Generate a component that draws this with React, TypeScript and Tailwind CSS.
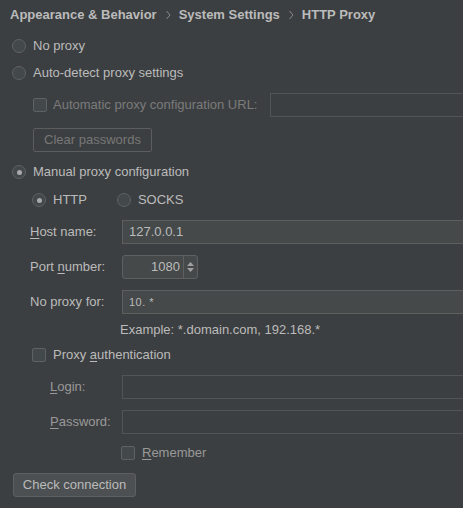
import React from "react";

const font = { fontFamily: '"Liberation Sans", Arial, sans-serif' };

function Radio({ checked }: { checked?: boolean }) {
  return (
    <span className="flex h-[14px] w-[14px] shrink-0 items-center justify-center rounded-full border border-[#5e6264] bg-[#43494a]">
      {checked && <span className="h-[5px] w-[5px] rounded-full bg-[#a9a9a9]" />}
    </span>
  );
}

function Checkbox() {
  return <span className="block h-[14px] w-[14px] shrink-0 rounded-[2px] border border-[#5e6264] bg-[#43494a]" />;
}

function Chevron() {
  return (
    <svg width="12" height="12" viewBox="0 0 12 12" className="mx-[5px] shrink-0">
      <path d="M4.5 2 L8 6 L4.5 10" fill="none" stroke="#8a8a8a" strokeWidth="1" />
    </svg>
  );
}

function Input({ value, small }: { value?: string; small?: boolean }) {
  return (
    <div className="flex h-[24px] w-[380px] shrink-0 items-center border border-[#5e6060] bg-[#45494a] px-[6px] text-[13px] text-[#bbbbbb]">
      {small ? <span className="text-[11px] tracking-[0.5px]">{value}</span> : value}
    </div>
  );
}

export default function App() {
  return (
    <div className="h-[508px] w-[463px] overflow-hidden whitespace-nowrap bg-[#3c3f41] text-[13px] text-[#bbbbbb]" style={font}>
      <div className="flex h-[30px] items-center pl-[10px] font-bold text-[#bbbbbb]">
        <span>Appearance &amp; Behavior</span>
        <Chevron />
        <span>System Settings</span>
        <Chevron />
        <span>HTTP Proxy</span>
      </div>

      <div className="mt-[2px] flex h-[28px] items-center gap-[7px] pl-[12px]">
        <Radio />
        <span>No proxy</span>
      </div>
      <div className="flex h-[26px] items-center gap-[7px] pl-[12px]">
        <Radio />
        <span>Auto-detect proxy settings</span>
      </div>

      <div className="mt-[6px] flex h-[25px] items-center pl-[33px]">
        <Checkbox />
        <span className="ml-[6px] shrink-0 text-[#7b7b7b]">Automatic proxy configuration URL:</span>
        <div className="ml-[13px] h-[24px] w-[300px] shrink-0 border border-[#525556] bg-[#3c3f41]" />
      </div>

      <div className="mt-[11px] pl-[33px]">
        <div className="flex h-[24px] w-[119px] items-center justify-center rounded-[2px] border border-[#5b5d5f] text-[#777777]">
          Clear passwords
        </div>
      </div>

      <div className="mt-[7px] flex h-[26px] items-center gap-[7px] pl-[12px]">
        <Radio checked />
        <span>Manual proxy configuration</span>
      </div>

      <div className="mt-[2px] flex h-[26px] items-center pl-[32px]">
        <Radio checked />
        <span className="ml-[7px]">HTTP</span>
        <span className="ml-[30px]"><Radio /></span>
        <span className="ml-[7px]">SOCKS</span>
      </div>

      <div className="mt-[7px] flex items-center pl-[30px]">
        <span className="w-[92px] shrink-0"><u className="underline-offset-2">H</u>ost name:</span>
        <Input value="127.0.0.1" />
      </div>

      <div className="mt-[11px] flex items-center pl-[30px]">
        <span className="w-[92px] shrink-0">Port <u className="underline-offset-2">n</u>umber:</span>
        <div className="flex h-[24px] w-[76px] shrink-0 items-stretch rounded-[3px] border border-[#5e6060] bg-[#45494a]">
          <span className="flex flex-1 items-center justify-end pr-[3px] text-[13px]">1080</span>
          <span className="w-px bg-[#5e6060]" />
          <span className="flex w-[13px] flex-col items-center justify-center gap-[2px]">
            <svg width="7" height="4" viewBox="0 0 7 4"><path d="M0 4 L3.5 0 L7 4 Z" fill="#a0a0a0" /></svg>
            <svg width="7" height="4" viewBox="0 0 7 4"><path d="M0 0 L3.5 4 L7 0 Z" fill="#a0a0a0" /></svg>
          </span>
        </div>
      </div>

      <div className="mt-[11px] flex items-center pl-[30px]">
        <span className="w-[92px] shrink-0">No proxy for:</span>
        <Input value="10. *" small />
      </div>

      <div className="mt-[5px] flex h-[22px] items-center pl-[120px]">Example: *.domain.com, 192.168.*</div>

      <div className="mt-[2px] flex h-[24px] items-center pl-[32px]">
        <Checkbox />
        <span className="ml-[7px]">Proxy <u className="underline-offset-2">a</u>uthentication</span>
      </div>

      <div className="mt-[8px] flex items-center pl-[50px]">
        <span className="w-[72px] shrink-0 text-[#999999]"><u className="underline-offset-2">L</u>ogin:</span>
        <div className="h-[24px] w-[380px] shrink-0 border border-[#525556] bg-[#3c3f41]" />
      </div>

      <div className="mt-[11px] flex items-center pl-[50px]">
        <span className="w-[72px] shrink-0 text-[#999999]"><u className="underline-offset-2">P</u>assword:</span>
        <div className="h-[24px] w-[380px] shrink-0 border border-[#525556] bg-[#3c3f41]" />
      </div>

      <div className="mt-[7px] flex h-[24px] items-center pl-[121px]">
        <Checkbox />
        <span className="ml-[7px] text-[#999999]"><u className="underline-offset-2">R</u>emember</span>
      </div>

      <div className="mt-[8px] pl-[13px]">
        <div className="flex h-[24px] w-[123px] items-center justify-center rounded-[3px] border border-[#5e6060] bg-[#4c5052] text-[#bbbbbb]">
          Check connection
        </div>
      </div>
    </div>
  );
}
